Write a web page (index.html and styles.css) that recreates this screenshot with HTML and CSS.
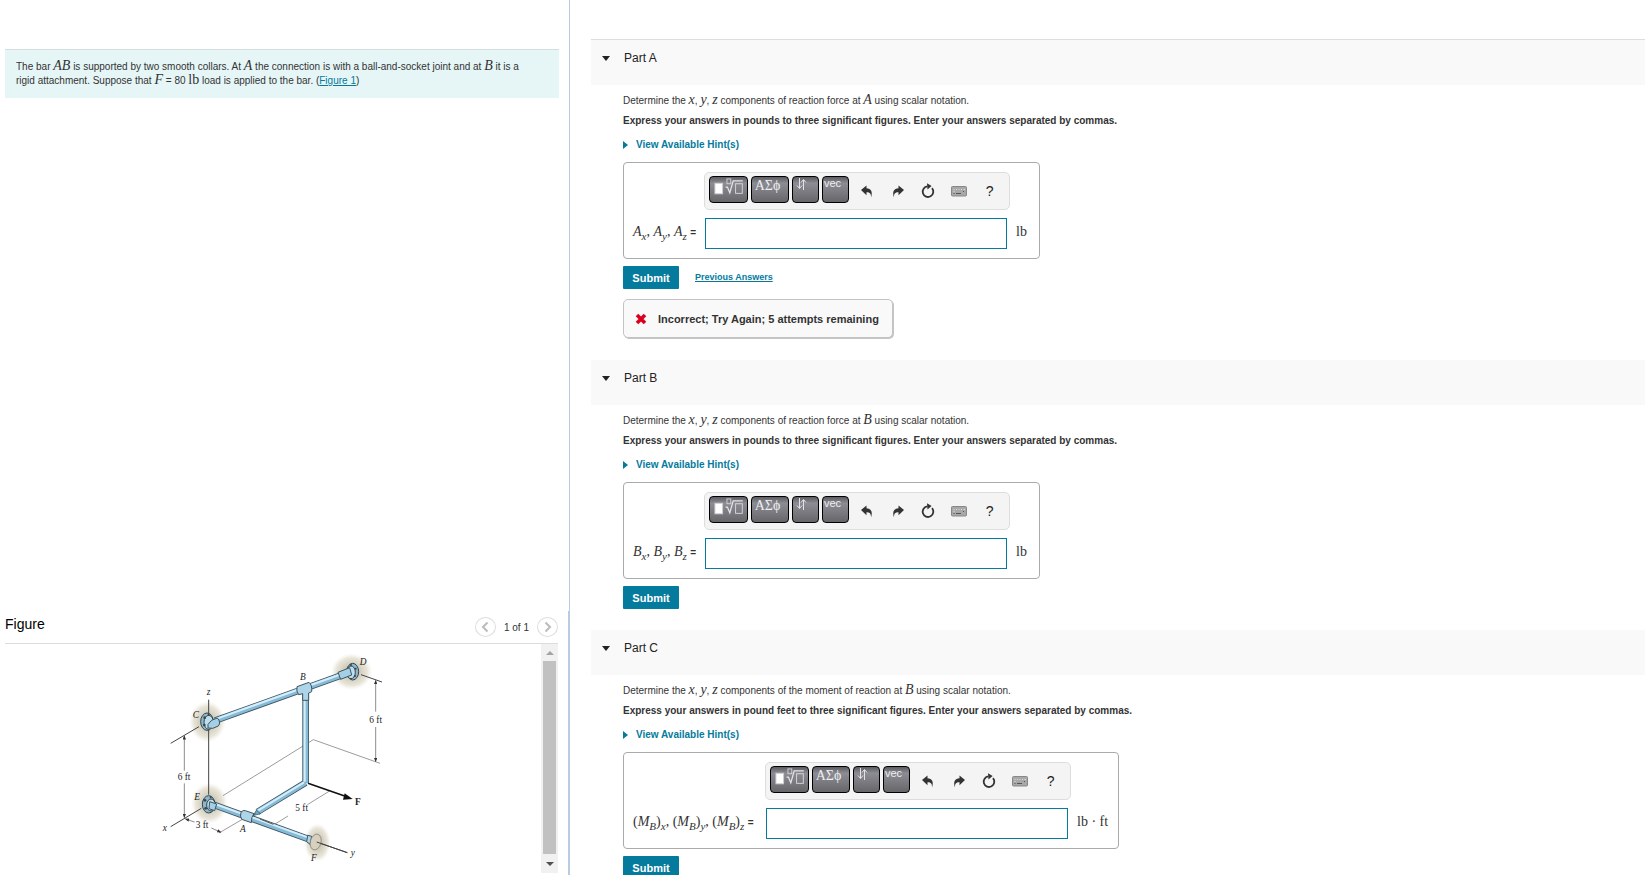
FILE: index.html
```html
<!DOCTYPE html>
<html lang="en">

<head>
    <meta charset="UTF-8">
    <title>Bar AB - Reactions</title>
    <link rel="stylesheet" href="styles.css">
</head>

<body>
    <!-- shared toolbar icons -->
    <svg class="sprite" aria-hidden="true">
        <symbol id="icon-root" viewBox="0 0 39 27">
            <rect x="4" y="6" width="8" height="11" fill="#fff" stroke="#ccc" stroke-width="1" />
            <path d="M15 10h2l2.500 6L23 3.500h10" fill="none" stroke="#e4e4e8" stroke-width="1.300" />
            <rect x="16.500" y="1.500" width="4" height="5" fill="none" stroke="#d0d0d4" />
            <rect x="25.500" y="6.500" width="7" height="10" fill="none" stroke="#d4d4d8" />
        </symbol>
        <symbol id="icon-arrows" viewBox="0 0 14 14">
            <path d="M3.500 1v10M1 8.500l2.500 3 2.500-3M7.500 13V3M5 5.500l2.500-3 2.500 3" fill="none" stroke="#e4e4e8" stroke-width="1" />
        </symbol>
        <symbol id="icon-undo" viewBox="0 0 14 14">
            <path d="M1 6L6.500 1.500v2.700c4.500 .2 6.500 3.300 4.500 9.300.2-4-1.200-5.300-4.500-5.200v2.900z" fill="#333" />
        </symbol>
        <symbol id="icon-reset" viewBox="0 0 16 16">
            <path d="M12 5.200A5.300 5.300 0 1 1 7.500 3.400" fill="none" stroke="#333" stroke-width="1.800" />
            <path d="M7 .3l4.600 2.800L7.500 6.500z" fill="#333" />
        </symbol>
        <symbol id="icon-keyboard" viewBox="0 0 16 11">
            <rect x=".5" y=".5" width="15" height="9.500" rx="1" fill="#a8a8a8" stroke="#888" />
            <path d="M2.500 3.500h1M5 3.500h1M7.500 3.500h1M10 3.500h1M2.500 5.500h1M12.500 3.500h1.500" stroke="#ddd" />
            <path d="M5 7.500h5M2.500 7.500h1M12 5.500h1" stroke="#555" />
        </symbol>
    </svg>

    <div class="layout">
        <aside class="left">
            <div class="problem">
                The bar <i class="m">AB</i> is supported by two smooth collars. At <i class="m">A</i> the connection is with a ball-and-socket joint and at <i class="m">B</i> it is a rigid attachment. Suppose that <i class="m">F</i> = 80 <span class="m">lb</span> load is applied to the bar. (<a href="#figure">Figure 1</a>)
            </div>

            <section class="figure" id="figure">
                <div class="figure-head">
                    <h2>Figure</h2>
                    <div class="pager">
                        <button type="button" aria-label="Previous figure"><svg width="8" height="12" viewBox="0 0 8 12"><path d="M6.500 1.500L2 6l4.500 4.500" /></svg></button>
                        <span>1 of 1</span>
                        <button type="button" aria-label="Next figure"><svg width="8" height="12" viewBox="0 0 8 12"><path d="M1.500 1.500L6 6l-4.500 4.500" /></svg></button>
                    </div>
                </div>
                <div class="figure-body">
                    <svg class="drawing" width="250" height="228" viewBox="0 0 750 684">
                        <defs>
                            <radialGradient id="wall">
                                <stop offset="0.350" stop-color="#cfcab8" />
                                <stop offset="0.750" stop-color="#e2decf" stop-opacity="0.800" />
                                <stop offset="1" stop-color="#efece2" stop-opacity="0" />
                            </radialGradient>
                            <marker id="tip" viewBox="0 0 10 8" markerWidth="16" markerHeight="10" refX="9" refY="4" orient="auto-start-reverse" markerUnits="userSpaceOnUse">
                                <path d="M0 0l10 4-10 4z" fill="#333" />
                            </marker>
                        </defs>
                        <g fill="url(#wall)">
                            <ellipse cx="172" cy="227" rx="55" ry="62" />
                            <ellipse cx="178" cy="472" rx="55" ry="62" />
                            <ellipse cx="605" cy="77" rx="62" ry="55" />
                            <ellipse cx="502" cy="590" rx="40" ry="58" />
                        </g>
                        <!-- construction lines -->
                        <g fill="none" stroke="#888" stroke-width="2.500">
                            <path d="M219 449L490 281l200 71M207 561l75-44M369 538l45-28M472 476l65-40" />
                        </g>
                        <g fill="none" stroke="#444" stroke-width="3">
                            <path d="M176 161v285M62 292l85-50M62 542l92-55M633 86l63 22M500 588l92 32" />
                        </g>
                        <g fill="none" stroke="#555" stroke-width="2">
                            <path d="M103 374V269" marker-end="url(#tip)" />
                            <path d="M103 412v103" marker-end="url(#tip)" />
                            <path d="M677 197V103" marker-end="url(#tip)" />
                            <path d="M677 243v104" marker-end="url(#tip)" />
                            <path d="M134 528l-28-9" marker-end="url(#tip)" />
                            <path d="M184 546l29 13" marker-end="url(#tip)" />
                        </g>
                        <!-- pipes: dark outline, blue body, highlight -->
                        <g fill="none" stroke-linejoin="round">
                            <g stroke="#41535e" stroke-width="20">
                                <path d="M195 224L605 77M467 140v270M467 410L322 498M190 476L486 583" />
                            </g>
                            <g stroke="#84bbd8" stroke-width="15">
                                <path d="M195 224L605 77M467 140v270M467 410L322 498M190 476L486 583" />
                            </g>
                            <g stroke="#d5edf8" stroke-width="6">
                                <path d="M195 220L600 75M464 145v262M462 409L325 493M195 474L482 577" />
                            </g>
                        </g>
                        <path d="M309 509l10-16 13 10zM307 509l10-6" fill="#69abc9" stroke="#355" stroke-width="2" />
                        <path d="M330 519l40 16" stroke="#555" stroke-width="3" />
                        <!-- collars -->
                        <g fill="#acd5e9" stroke="#41535e" stroke-width="3">
                            <path d="M441 122l36-13q10 8 8 28l-9 4v22h-18v-20l-12 3q-8-10-5-24z" />
                            <path d="M273 499q6-8 13-5l26 9q-9 10-8 27l-29-10q-6-9-2-21z" />
                            <path d="M176 466l18 6q-8 9-6 22l-12-3zM473 568l12 3-5 24-10-8z" />
                        </g>
                        <!-- flanges -->
                        <g stroke="#34454f" stroke-width="3">
                            <ellipse cx="171" cy="227" rx="19" ry="26" fill="#8fb6c9" />
                            <ellipse cx="176" cy="229" rx="14" ry="21" fill="#bfdeeb" />
                            <ellipse cx="176" cy="475" rx="19" ry="26" fill="#8fb6c9" />
                            <ellipse cx="183" cy="477" rx="13" ry="18" fill="#bfdeeb" />
                            <ellipse cx="608" cy="77" rx="18" ry="25" fill="#8fb6c9" />
                            <ellipse cx="603" cy="79" rx="13" ry="19" fill="#bfdeeb" />
                        </g>
                        <g fill="#a3d0e6" stroke="#41535e" stroke-width="3">
                            <path d="M174 235q8-15 28-19 12 12 3 24-18 11-31 6z" />
                            <path d="M179 467l21 7-6 20-17-6z" />
                            <path d="M564 79l35-14 6 22-33 13z" />
                        </g>
                        <g fill="#34454f">
                            <circle cx="164" cy="215" r="4" /><circle cx="163" cy="237" r="4" /><circle cx="176" cy="206" r="3" />
                            <circle cx="165" cy="463" r="4" /><circle cx="167" cy="487" r="4" /><circle cx="182" cy="454" r="3" />
                            <circle cx="603" cy="57" r="3" /><circle cx="617" cy="68" r="3" /><circle cx="615" cy="90" r="3" />
                        </g>
                        <ellipse cx="497" cy="588" rx="16" ry="24" transform="rotate(15 497 588)" fill="#d6d0bd" stroke="#777" stroke-width="2" />
                        <path d="M500 588l92 32" stroke="#444" stroke-width="3" />
                        <path d="M474 412l112 39" stroke="#111" stroke-width="5" />
                        <path d="M584 442l24 17-29 2z" fill="#111" />
                        <g class="labels">
                            <text x="170" y="147">z</text>
                            <text x="128" y="216">C</text>
                            <text x="450" y="101">B</text>
                            <text x="629" y="57">D</text>
                            <text x="133" y="461">E</text>
                            <text x="270" y="557">A</text>
                            <text x="483" y="646">F</text>
                            <text x="38" y="554">x</text>
                            <text x="602" y="629">y</text>
                            <g class="upright">
                                <text x="83" y="402">6 ft</text>
                                <text x="658" y="232">6 ft</text>
                                <text x="137" y="547">3 ft</text>
                                <text x="436" y="494">5 ft</text>
                                <text x="615" y="477" font-weight="bold">F</text>
                            </g>
                        </g>
                    </svg>
                    <div class="scrollbar" aria-hidden="true">
                        <span class="arrow up"></span>
                        <span class="thumb"></span>
                        <span class="arrow down"></span>
                    </div>
                </div>
            </section>
        </aside>

        <main class="right">
            <section class="part">
                <h2 class="part-head"><span class="caret"></span>Part A</h2>
                <div class="part-body">
                    <p class="question">Determine the <i class="m">x</i>, <i class="m">y</i>, <i class="m">z</i> components of reaction force at <i class="m">A</i> using scalar notation.</p>
                    <p class="instructions">Express your answers in pounds to three significant figures. Enter your answers separated by commas.</p>
                    <button type="button" class="hints">View Available Hint(s)</button>
                    <div class="answer">
                        <div class="toolbar">
                            <button type="button" class="key wide" aria-label="Templates"><svg width="35" height="25" viewBox="2 0 35 25"><use href="#icon-root" width="39" height="27" /></svg></button>
                            <button type="button" class="key wide greek">ΑΣϕ</button>
                            <button type="button" class="key" aria-label="Arrows"><svg width="14" height="14"><use href="#icon-arrows" /></svg></button>
                            <button type="button" class="key vec">vec</button>
                            <button type="button" class="tool" aria-label="Undo"><svg width="14" height="14"><use href="#icon-undo" /></svg></button>
                            <button type="button" class="tool redo" aria-label="Redo"><svg width="14" height="14"><use href="#icon-undo" /></svg></button>
                            <button type="button" class="tool" aria-label="Reset"><svg width="16" height="16"><use href="#icon-reset" /></svg></button>
                            <button type="button" class="tool" aria-label="Keyboard"><svg width="16" height="11"><use href="#icon-keyboard" /></svg></button>
                            <button type="button" class="tool">?</button>
                        </div>
                        <label for="answerA"><i>A<sub>x</sub></i>, <i>A<sub>y</sub></i>, <i>A<sub>z</sub></i> <b>=</b></label>
                        <input type="text" id="answerA">
                        <span class="unit">lb</span>
                    </div>
                    <div class="actions">
                        <button type="submit" class="submit">Submit</button>
                        <a href="#previous">Previous Answers</a>
                    </div>
                    <div class="feedback">
                        <svg width="12" height="12" viewBox="0 0 12 12"><path d="M2 2l8 8M10 2l-8 8" stroke="#dc0020" stroke-width="3.600" /></svg>
                        Incorrect; Try Again; 5 attempts remaining
                    </div>
                </div>
            </section>

            <section class="part">
                <h2 class="part-head"><span class="caret"></span>Part B</h2>
                <div class="part-body">
                    <p class="question">Determine the <i class="m">x</i>, <i class="m">y</i>, <i class="m">z</i> components of reaction force at <i class="m">B</i> using scalar notation.</p>
                    <p class="instructions">Express your answers in pounds to three significant figures. Enter your answers separated by commas.</p>
                    <button type="button" class="hints">View Available Hint(s)</button>
                    <div class="answer">
                        <div class="toolbar">
                            <button type="button" class="key wide" aria-label="Templates"><svg width="35" height="25" viewBox="2 0 35 25"><use href="#icon-root" width="39" height="27" /></svg></button>
                            <button type="button" class="key wide greek">ΑΣϕ</button>
                            <button type="button" class="key" aria-label="Arrows"><svg width="14" height="14"><use href="#icon-arrows" /></svg></button>
                            <button type="button" class="key vec">vec</button>
                            <button type="button" class="tool" aria-label="Undo"><svg width="14" height="14"><use href="#icon-undo" /></svg></button>
                            <button type="button" class="tool redo" aria-label="Redo"><svg width="14" height="14"><use href="#icon-undo" /></svg></button>
                            <button type="button" class="tool" aria-label="Reset"><svg width="16" height="16"><use href="#icon-reset" /></svg></button>
                            <button type="button" class="tool" aria-label="Keyboard"><svg width="16" height="11"><use href="#icon-keyboard" /></svg></button>
                            <button type="button" class="tool">?</button>
                        </div>
                        <label for="answerB"><i>B<sub>x</sub></i>, <i>B<sub>y</sub></i>, <i>B<sub>z</sub></i> <b>=</b></label>
                        <input type="text" id="answerB">
                        <span class="unit">lb</span>
                    </div>
                    <div class="actions">
                        <button type="submit" class="submit">Submit</button>
                    </div>
                </div>
            </section>

            <section class="part">
                <h2 class="part-head"><span class="caret"></span>Part C</h2>
                <div class="part-body">
                    <p class="question">Determine the <i class="m">x</i>, <i class="m">y</i>, <i class="m">z</i> components of the moment of reaction at <i class="m">B</i> using scalar notation.</p>
                    <p class="instructions">Express your answers in pound feet to three significant figures. Enter your answers separated by commas.</p>
                    <button type="button" class="hints">View Available Hint(s)</button>
                    <div class="answer moment">
                        <div class="toolbar">
                            <button type="button" class="key wide" aria-label="Templates"><svg width="35" height="25" viewBox="2 0 35 25"><use href="#icon-root" width="39" height="27" /></svg></button>
                            <button type="button" class="key wide greek">ΑΣϕ</button>
                            <button type="button" class="key" aria-label="Arrows"><svg width="14" height="14"><use href="#icon-arrows" /></svg></button>
                            <button type="button" class="key vec">vec</button>
                            <button type="button" class="tool" aria-label="Undo"><svg width="14" height="14"><use href="#icon-undo" /></svg></button>
                            <button type="button" class="tool redo" aria-label="Redo"><svg width="14" height="14"><use href="#icon-undo" /></svg></button>
                            <button type="button" class="tool" aria-label="Reset"><svg width="16" height="16"><use href="#icon-reset" /></svg></button>
                            <button type="button" class="tool" aria-label="Keyboard"><svg width="16" height="11"><use href="#icon-keyboard" /></svg></button>
                            <button type="button" class="tool">?</button>
                        </div>
                        <label for="answerC">(<i>M<sub>B</sub></i>)<i><sub>x</sub></i>, (<i>M<sub>B</sub></i>)<i><sub>y</sub></i>, (<i>M<sub>B</sub></i>)<i><sub>z</sub></i> <b>=</b></label>
                        <input type="text" id="answerC">
                        <span class="unit">lb · ft</span>
                    </div>
                    <div class="actions">
                        <button type="submit" class="submit">Submit</button>
                    </div>
                </div>
            </section>
        </main>
    </div>
</body>

</html>
```
FILE: styles.css
```css
* {
    box-sizing: border-box;
}

body {
    margin: 0;
    font: 10px/14px "Liberation Sans", Arial, sans-serif;
    color: #333;
    background-color: #fff;
}

button {
    margin: 0;
    padding: 0;
    border: 0;
    background: none;
    font-family: inherit;
    color: inherit;
    cursor: pointer;
}

h2,
p {
    margin: 0;
}

a {
    color: #047a9c;
}

.sprite {
    position: absolute;
    width: 0;
    height: 0;
}

/* math symbols inside running text */
.m {
    font-family: "Liberation Serif", "Times New Roman", serif;
    font-size: 14px;
    line-height: 12px;
}

.layout {
    display: flex;
    height: 100vh;
}

.left {
    display: flex;
    flex-direction: column;
    justify-content: space-between;
    flex: 0 0 570px;
    padding: 49px 0 0 5px;
    border-right: 1px solid #b8cbe0;
}

.problem {
    margin-right: 10px;
    padding: 10px 20px 10px 11px;
    height: 49px;
    border-top: 1px solid #d6dfdf;
    background-color: #e6f6f7;
}

.figure {
    padding-right: 10px;
    border-right: 1px solid #b8cbe0;
}

.figure-head {
    display: flex;
    justify-content: space-between;
    height: 33px;
    border-bottom: 1px solid #ddd;
}

.figure-head h2 {
    font-size: 14px;
    font-weight: normal;
    line-height: 27px;
    color: #000;
}

.pager {
    display: flex;
    align-items: center;
    gap: 8px;
    height: 31px;
}

.pager button {
    display: flex;
    align-items: center;
    justify-content: center;
    width: 21px;
    height: 20px;
    border: 1px solid #ddd;
    border-radius: 50%;
}

.pager span {
    padding-top: 2px;
}

.pager path {
    fill: none;
    stroke: #bbb;
    stroke-width: 2;
}

.figure-body {
    display: flex;
    justify-content: space-between;
    height: 231px;
}

.drawing {
    margin: 2px 0 0 145px;
}

.labels {
    font: italic 28px "Liberation Serif", "Times New Roman", serif;
    fill: #222;
}

.upright {
    font-style: normal;
}

.scrollbar {
    display: flex;
    flex-direction: column;
    align-items: center;
    justify-content: space-between;
    width: 17px;
    height: 229px;
    padding: 7px 0;
    background-color: #f1f1f1;
}

.thumb {
    flex: 1;
    width: 13px;
    margin: 6px 0 8px;
    background-color: #c1c1c1;
}

.arrow {
    border: 4px solid transparent;
}

.arrow.up {
    border-top: 0;
    border-bottom-color: #a3a3a3;
}

.arrow.down {
    border-bottom: 0;
    border-top-color: #505050;
}

.right {
    flex: 1;
    padding: 39px 0 0 21px;
    overflow: hidden;
}

.part-head {
    display: flex;
    align-items: center;
    height: 45px;
    padding: 0 11px 9px;
    background-color: #f9f9f9;
    font-size: 12px;
    font-weight: normal;
    color: #222;
}

.part:first-child .part-head {
    height: 46px;
    border-top: 1px solid #ddd;
}

.caret {
    margin-right: 14px;
    border: 4px solid transparent;
    border-top: 5px solid #222;
    border-bottom: 0;
}

.part-body {
    padding: 9px 0 21px 32px;
}

.question {
    line-height: 14px;
}

.instructions {
    margin-top: 6px;
    font-weight: bold;
}

.hints {
    display: flex;
    align-items: center;
    margin: 10px 0;
    font-size: 10px;
    font-weight: bold;
    line-height: 14px;
    color: #047a9c;
}

.hints::before {
    content: "";
    margin-right: 8px;
    border: 4px solid transparent;
    border-left: 5px solid #047a9c;
    border-right: 0;
}

.answer {
    display: grid;
    grid-template-columns: 72px 302px auto;
    row-gap: 8px;
    width: 417px;
    height: 97px;
    padding: 9px 0 10px 9px;
    border: 1px solid #aaa;
    border-radius: 4px;
}

.answer.moment {
    grid-template-columns: 133px 302px auto;
    width: 496px;
}

.toolbar {
    grid-column: 2 / 4;
    display: flex;
    align-items: center;
    width: 306px;
    height: 38px;
    margin-left: -1px;
    padding: 0 4px;
    border: 1px solid #ddd;
    border-radius: 5px;
    background-color: #f4f4f4;
}

.key {
    display: flex;
    align-items: flex-start;
    width: 27px;
    height: 27px;
    margin: 0 3px 3px 0;
    padding-left: 3px;
    border: 1px solid #000;
    border-radius: 4px;
    background: linear-gradient(#5c5c62, #8c8c94 25%, #66666a);
    color: #eee;
    font-size: 11px;
    line-height: 13px;
    overflow: hidden;
}

.key.wide {
    width: 39px;
}

.key.greek {
    font-family: "Liberation Serif", "Times New Roman", serif;
    font-size: 14px;
    line-height: 17px;
}

.key.vec {
    padding-left: 1px;
}

.tool {
    display: flex;
    align-items: center;
    justify-content: center;
    width: 31px;
    font-size: 14px;
    color: #222;
}

.redo svg {
    transform: scaleX(-1);
}

.answer label,
.unit {
    align-self: center;
    padding-bottom: 4px;
    font: 14px/20px "Liberation Serif", "Times New Roman", serif;
    white-space: nowrap;
}

.answer sub {
    font-size: 11px;
    line-height: 0;
}

.answer b {
    font: bold 10px "Liberation Sans", Arial, sans-serif;
}

.answer input {
    width: 302px;
    height: 31px;
    padding: 0 6px;
    border: 1px solid #047a9c;
    background-color: #fff;
}

.unit {
    margin-left: 9px;
}

.actions {
    display: flex;
    gap: 16px;
    margin-top: 7px;
}

.submit {
    width: 56px;
    height: 23px;
    border-radius: 1px;
    background-color: #047a9c;
    font-size: 11px;
    font-weight: bold;
    color: #fff;
}

.actions a {
    font-size: 9px;
    font-weight: bold;
    line-height: 22px;
}

.feedback {
    display: flex;
    align-items: center;
    gap: 11px;
    width: fit-content;
    height: 39px;
    margin: 10px 0 1px;
    padding: 0 13px 0 11px;
    border: 1px solid #c4c4c4;
    border-radius: 5px;
    box-shadow: 1px 1px 0 #c4c4c4;
    background-color: #f9f9f9;
    font-size: 11px;
    font-weight: bold;
}
```
